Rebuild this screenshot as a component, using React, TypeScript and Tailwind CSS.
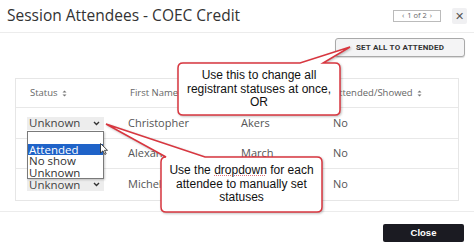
import React from "react";

const ui = { fontFamily: '"Open Sans", "Noto Sans", sans-serif' };
const arial = { fontFamily: '"Liberation Sans", Arial, sans-serif' };

function SortIcon() {
  return (
    <svg width="5" height="7" viewBox="0 0 5 7" className="ml-1 inline-block">
      <path d="M2.5 0.5 L4.5 2.5 H0.5 Z M2.5 6.5 L4.5 4.5 H0.5 Z" fill="#777" />
    </svg>
  );
}

function Chevron() {
  return (
    <svg width="7" height="5" viewBox="0 0 7 5">
      <path d="M1 1 L3.5 3.5 L6 1" stroke="#333" strokeWidth="1.4" fill="none" />
    </svg>
  );
}

function StatusSelect() {
  return (
    <div className="flex h-[13px] w-[77px] items-center justify-between bg-[#ededed] pl-[2px] pr-[4px] text-[11.5px] leading-none text-[#444]">
      <span>Unknown</span>
      <Chevron />
    </div>
  );
}

const rows = [
  { first: "Christopher", last: "Akers", h: "h-[31px]" },
  { first: "Alexander", last: "March", h: "h-[30px]" },
  { first: "Michelle", last: "", h: "h-[31px]" },
];

export default function App() {
  return (
    <div className="relative h-[250px] w-[474px] overflow-hidden bg-white" style={ui}>
      {/* header */}
      <div className="flex h-[33px] items-center justify-between border-b border-[#ececec] pl-[7px] pr-[7px]">
        <div className="text-[15.5px] text-[#333]">Session Attendees - COEC Credit</div>
        <div className="flex items-center gap-[11px]">
          <div className="flex h-[12px] w-[48px] items-center justify-center gap-[3px] border border-[#bbb] text-[7.5px] text-[#666]">
            <span>‹</span>
            <span>1 of 2</span>
            <span>›</span>
          </div>
          <div className="flex h-[16px] w-[15px] items-center justify-center rounded-[2px] bg-[#f0f0f2] text-[11px] text-[#555]">
            ✕
          </div>
        </div>
      </div>

      {/* body */}
      <div className="border-b border-[#ececec] pb-[10px]">
        <div className="flex justify-end pr-[9px] pt-[5px]">
          <div
            className="flex h-[19px] w-[130px] items-center justify-center rounded-[3px] border border-[#a9a9a9] bg-[#f4f4f5] text-[8px] font-bold tracking-[0.2px] text-[#333] shadow-[0_1px_1px_rgba(0,0,0,0.15)]"
            style={{ fontFamily: '"Roboto", "Liberation Sans", sans-serif' }}
          >
            SET ALL TO ATTENDED
          </div>
        </div>

        <div className="ml-[15px] mt-[21px] w-[444px] border border-[#e6e6e6] text-[11px] text-[#555]">
          <div className="flex h-[29px] items-center border-b border-[#e8e8e8] text-[9.5px] text-[#666]">
            <div className="w-[114px] pl-[14px]">
              Status
              <SortIcon />
            </div>
            <div className="w-[111px]">
              First Name
              <SortIcon />
            </div>
            <div className="w-[92px]">
              Last Name
              <SortIcon />
            </div>
            <div>
              Attended/Showed
              <SortIcon />
            </div>
          </div>
          {rows.map((r, i) => (
            <div
              key={r.first}
              className={`flex items-center ${r.h} ${i < rows.length - 1 ? "border-b border-[#e8e8e8]" : ""}`}
            >
              <div className="w-[112px] pl-[11px]">
                <StatusSelect />
              </div>
              <div className="w-[113px]">{r.first}</div>
              <div className="w-[92px]">{r.last}</div>
              <div>No</div>
            </div>
          ))}
        </div>
      </div>

      {/* footer */}
      <div className="flex justify-end pr-[10px] pt-[12px]">
        <div className="flex h-[18px] w-[81px] items-center justify-center rounded-[2px] bg-[#1b1b22] text-[9.5px] font-bold text-white" style={arial}>
          Close
        </div>
      </div>

      {/* open dropdown list */}
      <div className="absolute left-[27px] top-[131px] w-[77px] border border-[#7a7a7a] bg-white text-[11.5px] leading-[11.5px] text-[#333] shadow-[1px_1px_2px_rgba(0,0,0,0.2)]">
        <div className="h-[11.5px]" />
        <div className="h-[11.5px] bg-[#1f63c8] pl-[1px] text-white">Attended</div>
        <div className="h-[11.5px] pl-[1px]">No show</div>
        <div className="h-[11.5px] pl-[1px]">Unknown</div>
      </div>
      {/* mouse cursor */}
      <svg className="absolute left-[100px] top-[143px]" width="8" height="12" viewBox="0 0 8 12">
        <path d="M0.5 0.5 V10 L3 7.8 L4.8 11.5 L6.2 10.8 L4.5 7.3 H7.5 Z" fill="white" stroke="#222" strokeWidth="0.8" />
      </svg>

      {/* callouts */}
      <svg className="pointer-events-none absolute left-0 top-0" width="474" height="250">
        <path
          d="M184 63 H300 L350 47 L323 63 H335 Q340 63 340 68 V110 Q340 115 335 115 H183 Q178 115 178 110 V68 Q178 63 183 63 Z"
          fill="white"
          stroke="#d8363f"
          strokeWidth="1.5"
          style={{ filter: "drop-shadow(1px 1px 1px rgba(0,0,0,0.25))" }}
        />
        <path
          d="M166 157 L106 124 L205 157 H317 Q322 157 322 162 V207 Q322 212 317 212 H166 Q161 212 161 207 V162 Q161 157 166 157 Z"
          fill="white"
          stroke="#d8363f"
          strokeWidth="1.5"
          style={{ filter: "drop-shadow(1px 1px 1px rgba(0,0,0,0.25))" }}
        />
      </svg>
      <div
        className="absolute left-[178px] top-[69px] w-[162px] text-center text-[12px] leading-[13.5px] text-[#111]"
        style={arial}
      >
        Use this to change all
        <br />
        registrant statuses at once,
        <br />
        OR
      </div>
      <div
        className="absolute left-[161px] top-[164px] w-[161px] text-center text-[12px] leading-[13.5px] text-[#111]"
        style={arial}
      >
        Use the{" "}
        <span className="underline decoration-[#e0707a] decoration-dotted decoration-1 underline-offset-1">dropdown</span>{" "}
        for each
        <br />
        attendee to manually set
        <br />
        statuses
      </div>
    </div>
  );
}
